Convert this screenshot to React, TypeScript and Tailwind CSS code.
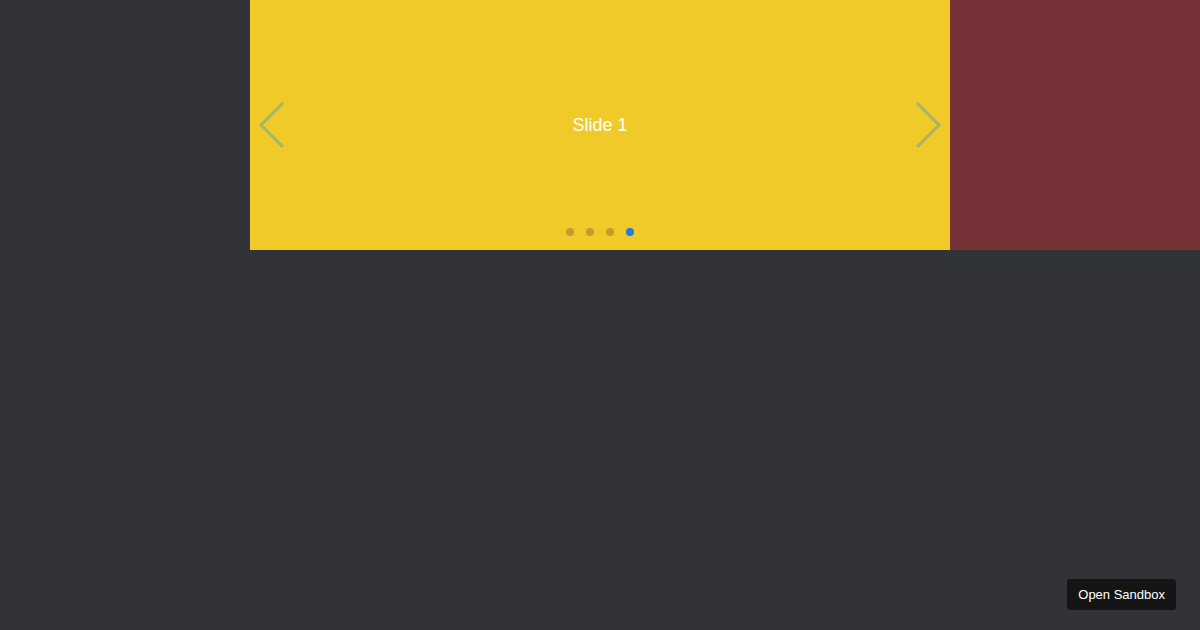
const DOTS = [0, 1, 2, 3];
const ACTIVE = 3;

function Chevron({ dir }: { dir: "left" | "right" }) {
  const d = dir === "left" ? "M23 2 L2 23 L23 44" : "M3 2 L24 23 L3 44";
  return (
    <svg width="27" height="46" viewBox="0 0 27 46" fill="none">
      <path d={d} stroke="#a9b46b" strokeWidth="3" strokeLinecap="square" />
    </svg>
  );
}

export default function App() {
  return (
    <div className="relative h-[630px] w-[1200px] overflow-hidden bg-[#323337] font-['Liberation_Sans',Arial,sans-serif]">
      <div className="flex h-[250px]">
        <div className="w-[250px] shrink-0" />
        <div className="relative flex w-[700px] shrink-0 items-center justify-center bg-[#f0ca28]">
          <span className="text-[18px] text-white">Slide 1</span>
          <button className="absolute left-[9px] top-[102px]">
            <Chevron dir="left" />
          </button>
          <button className="absolute right-[8px] top-[102px]">
            <Chevron dir="right" />
          </button>
          <div className="absolute bottom-[14px] left-0 right-0 flex justify-center">
            {DOTS.map((i) => (
              <span
                key={i}
                className={
                  i === ACTIVE
                    ? "mx-[6px] h-2 w-2 rounded-full bg-[#1f7ee0]"
                    : "mx-[6px] h-2 w-2 rounded-full bg-[#c09a2a]"
                }
              />
            ))}
          </div>
        </div>
        <div className="flex-1 bg-[#773238]" />
      </div>
      <button className="absolute bottom-[20px] right-[24px] h-[31px] rounded-[3px] bg-[#151515] px-[11px] text-[13px] text-white">
        Open Sandbox
      </button>
    </div>
  );
}
